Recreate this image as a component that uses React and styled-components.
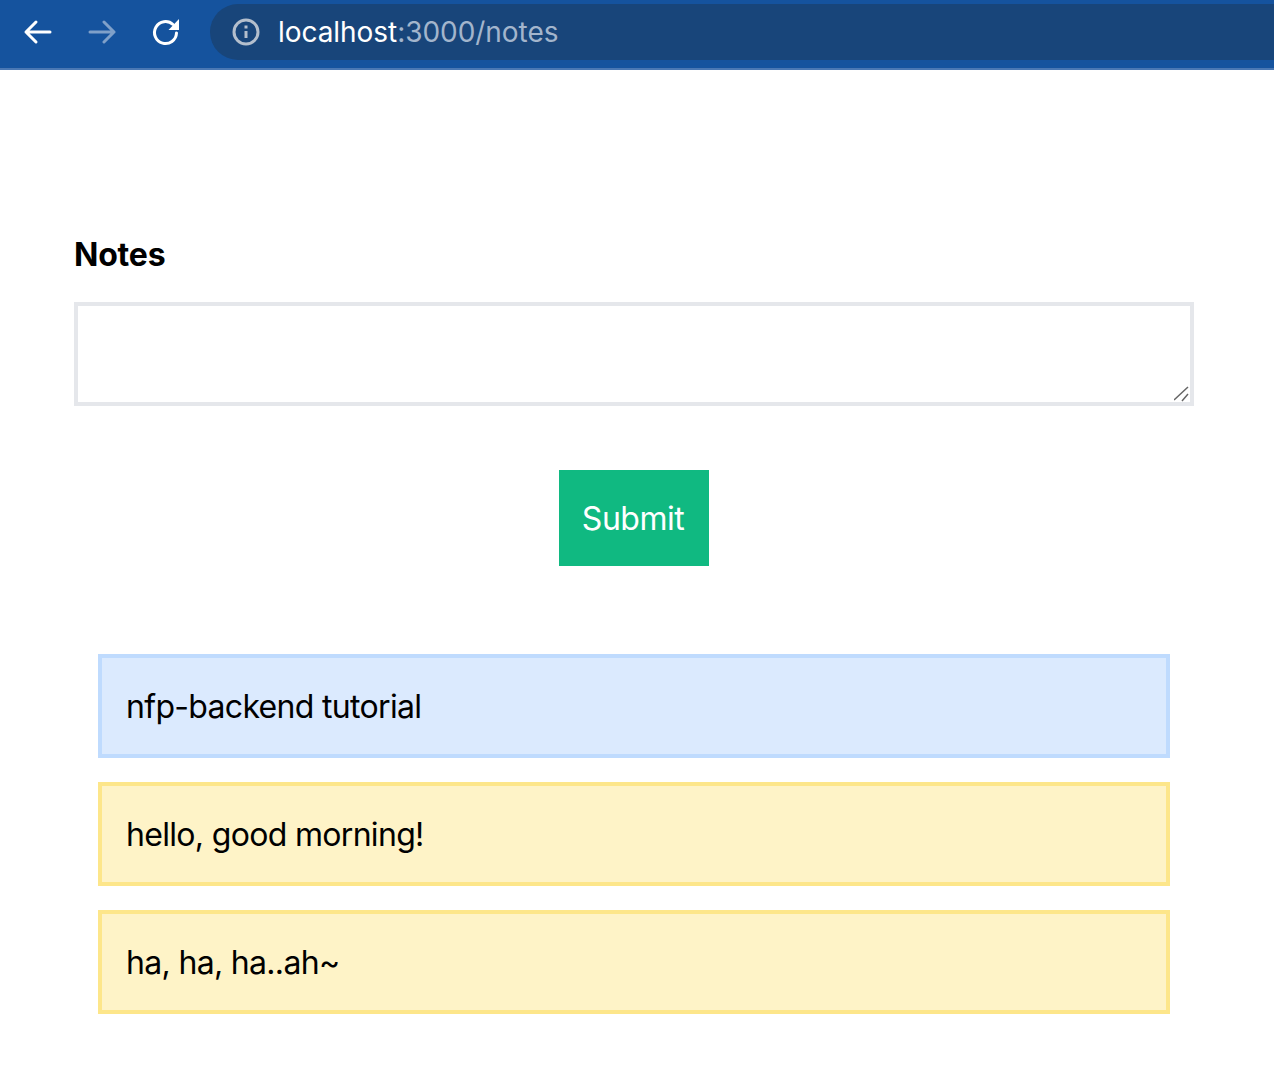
import React from "react";
import styled, { createGlobalStyle } from "styled-components";

const Global = createGlobalStyle`
  html, body { margin: 0; padding: 0; background: #fff; }
  body { font-family: Inter, "Liberation Sans", sans-serif; color: #000; }
`;

const Toolbar = styled.header`
  height: 68px;
  box-sizing: content-box;
  border-bottom: 2px solid #4a78b4;
  background: #15539e;
  display: flex;
  align-items: flex-start;
  overflow: hidden;
`;
const NavIcon = styled.svg`
  width: 32px;
  height: 32px;
  flex: none;
  margin-top: 16px;
  margin-left: ${(p) => p.$left}px;
  fill: none;
  stroke: #fff;
  stroke-width: 3;
  stroke-linecap: round;
  stroke-linejoin: round;
  opacity: ${(p) => (p.$dim ? 0.45 : 1)};
`;
const Omnibox = styled.div`
  flex: 1;
  height: 56px;
  margin: 4px 0 0 29px;
  padding-left: 22px;
  border-radius: 28px 0 0 28px;
  background: #18457a;
  display: flex;
  align-items: center;
  gap: 18px;
  font-size: 28px;
`;
const Url = styled.div`
  color: #fff;
  letter-spacing: -0.05px;
`;
const UrlRest = styled.span`
  color: #a3b5cc;
`;
const Main = styled.main`
  padding: 167px 80px 0 74px;
`;
const Label = styled.label`
  display: block;
  font-size: 32px;
  font-weight: 700;
  line-height: 36px;
  letter-spacing: -0.2px;
  margin-bottom: 29px;
`;
const InputWrap = styled.div`
  position: relative;
  width: 1120px;
`;
const NoteInput = styled.textarea`
  display: block;
  box-sizing: border-box;
  width: 100%;
  height: 104px;
  padding: 8px;
  margin: 0;
  border: 4px solid #e5e7eb;
  border-radius: 0;
  outline: none;
  background: #fff;
  font: inherit;
  resize: none;
`;
const Grip = styled.svg`
  position: absolute;
  right: 4px;
  bottom: 4px;
  width: 16px;
  height: 16px;
  stroke: #666;
  stroke-width: 1.5;
  fill: none;
  pointer-events: none;
`;
const Actions = styled.div`
  display: flex;
  justify-content: center;
  margin-top: 64px;
`;
const Submit = styled.button`
  width: 150px;
  height: 96px;
  border: none;
  padding: 2px 2px 0 0;
  background: #10b981;
  color: #fff;
  font-family: inherit;
  font-size: 32px;
  line-height: 1;
  letter-spacing: -0.5px;
`;
const NoteList = styled.ul`
  list-style: none;
  margin: 88px 0 0 24px;
  padding: 0;
  width: 1072px;
  display: flex;
  flex-direction: column;
  gap: 24px;
`;
const Note = styled.li`
  box-sizing: border-box;
  height: 104px;
  padding: 0 24px;
  display: flex;
  align-items: center;
  font-size: 32px;
  letter-spacing: -0.68px;
  border: 4px solid ${(p) => (p.$tone === "blue" ? "#bfdbfe" : "#fde68a")};
  background: ${(p) => (p.$tone === "blue" ? "#dbeafe" : "#fef3c7")};
`;

export default function App() {
  return (
    <>
      <Global />
      <Toolbar>
        <NavIcon $left={22} viewBox="0 0 32 32"><path d="M28 16H4M14 6 4 16l10 10" /></NavIcon>
        <NavIcon $left={32} $dim viewBox="0 0 32 32"><path d="M4 16h24M18 6l10 10-10 10" /></NavIcon>
        <NavIcon $left={31} viewBox="0 0 32 32">
          <path d="M24 8.5A11 11 0 1 0 27.5 17" />
          <path d="M30 3v11H19.5z" fill="#fff" stroke="none" />
        </NavIcon>
        <Omnibox>
          <svg width="28" height="28" viewBox="0 0 28 28" fill="none" stroke="#b4bfcd" strokeWidth="3" style={{ flex: "none" }}>
            <circle cx="14" cy="14" r="12" />
            <path d="M14 13v7" />
            <path d="M14 7.5v3" />
          </svg>
          <Url>localhost<UrlRest>:3000/notes</UrlRest></Url>
        </Omnibox>
      </Toolbar>
      <Main>
        <Label htmlFor="notes">Notes</Label>
        <InputWrap>
          <NoteInput id="notes" />
          <Grip viewBox="0 0 16 16">
            <path d="M0 14 14 1M8 15l6-7" />
          </Grip>
        </InputWrap>
        <Actions><Submit>Submit</Submit></Actions>
        <NoteList>
          <Note $tone="blue">nfp-backend tutorial</Note>
          <Note $tone="yellow">hello, good morning!</Note>
          <Note $tone="yellow">ha, ha, ha..ah~</Note>
        </NoteList>
      </Main>
    </>
  );
}
